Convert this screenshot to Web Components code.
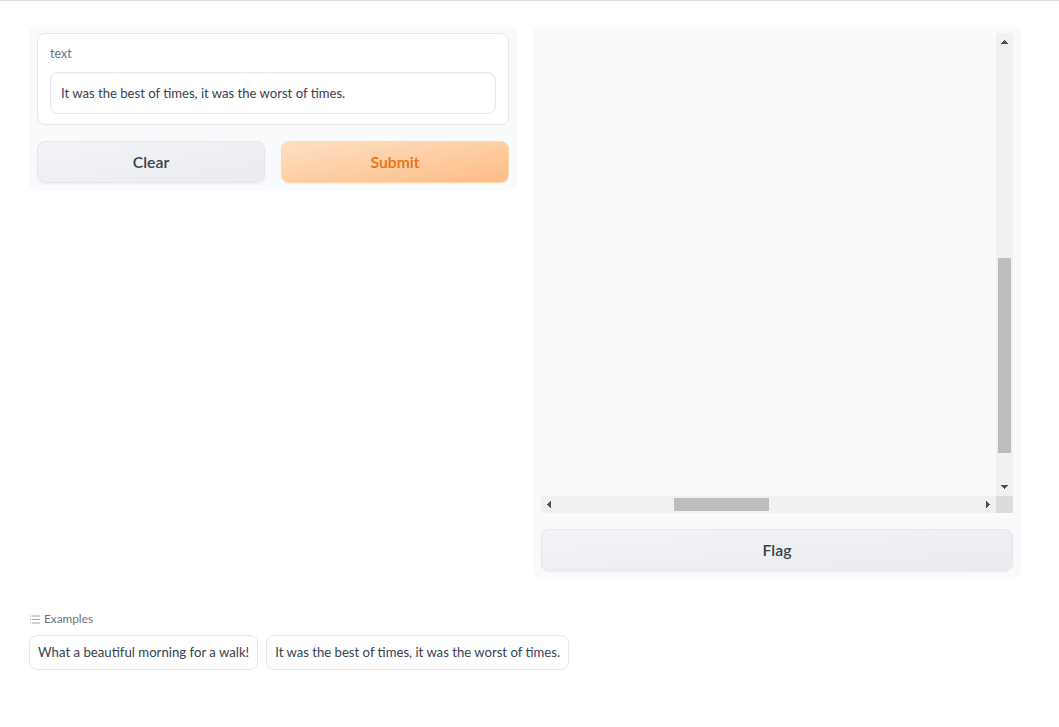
<!DOCTYPE html>
<html>
<head>
<meta charset="utf-8">
<title>Interface</title>
<style>
  html, body { margin: 0; padding: 0; background: #fff; }
  body { font-family: "Lato", "Noto Sans", sans-serif; color: #374151; border-top: 1px solid #dfdfdf; }
</style>
</head>
<body>
<app-shell>
  <app-panel slot="left">
    <text-box label="text" value="It was the best of times, it was the worst of times."></text-box>
    <div style="display:flex;gap:16px;margin-top:16px">
      <app-button>Clear</app-button>
      <app-button variant="primary">Submit</app-button>
    </div>
  </app-panel>
  <app-panel slot="right">
    <scroll-view></scroll-view>
    <div style="display:flex;margin-top:16px">
      <app-button>Flag</app-button>
    </div>
  </app-panel>
  <example-list slot="examples">
    <example-item style="font-size:13.2px">What a beautiful morning for a walk!</example-item>
    <example-item style="font-size:13.14px">It was the best of times, it was the worst of times.</example-item>
  </example-list>
</app-shell>

<script>
  class AppShell extends HTMLElement {
    constructor(){
      super();
      this.attachShadow({mode: "open"});
      this.shadowRoot.innerHTML = `
        <style>
          :host { display: block; padding: 24px 38px 0 29px; }
          .cols { display: grid; grid-template-columns: 488px 488px; gap: 16px; align-items: start; }
          .examples { margin-top: 32px; }
        </style>
        <div class="cols">
          <slot name="left"></slot>
          <slot name="right"></slot>
        </div>
        <div class="examples"><slot name="examples"></slot></div>`;
    }
  }

  class AppPanel extends HTMLElement {
    constructor(){
      super();
      this.attachShadow({mode: "open"});
      this.shadowRoot.innerHTML = `
        <style>
          :host { display: block; padding: 8px; background: #f9fafb; border-radius: 8px; }
        </style>
        <slot></slot>`;
    }
  }

  class TextBox extends HTMLElement {
    constructor(){
      super();
      this.attachShadow({mode: "open"});
      this.shadowRoot.innerHTML = `
        <style>
          :host { display: block; box-sizing: border-box; height: 92px; padding: 12px; background: #fff; border: 1px solid #e5e7eb; border-radius: 8px; }
          .label { font-size: 12.5px; line-height: 16px; color: #6b7280; margin-bottom: 10px; }
          .field { box-sizing: border-box; height: 42px; padding: 0 10px; display: flex; align-items: center; font-size: 13.1px; color: #374151; background: #fff; border: 1px solid #e5e7eb; border-radius: 8px; box-shadow: inset 0 1px 2px rgba(0,0,0,.05); }
        </style>
        <div class="label"></div>
        <div class="field"></div>`;
    }
    connectedCallback(){
      this.shadowRoot.querySelector(".label").textContent = this.getAttribute("label");
      this.shadowRoot.querySelector(".field").textContent = this.getAttribute("value");
    }
  }

  class AppButton extends HTMLElement {
    constructor(){
      super();
      this.attachShadow({mode: "open"});
      this.shadowRoot.innerHTML = `
        <style>
          :host { flex: 1; display: flex; align-items: center; justify-content: center; box-sizing: border-box; height: 42px; padding-bottom: 2px; font-size: 15.8px; font-weight: 600; color: #374151; border: 1px solid #e5e7eb; border-radius: 8px; background: linear-gradient(to bottom right, #f3f4f6, #e9ebef); box-shadow: 0 1px 2px rgba(0,0,0,.05); }
          :host([variant="primary"]) { color: #ea7010; border-color: #fed7aa; background: linear-gradient(to bottom right, #fee0c4, #fdbc84); }
        </style>
        <slot></slot>`;
    }
  }

  class ScrollView extends HTMLElement {
    constructor(){
      super();
      this.attachShadow({mode: "open"});
      this.shadowRoot.innerHTML = `
        <style>
          :host { display: grid; grid-template-columns: 455px 17px; grid-template-rows: 463px 17px; height: 480px; }
          .bar { background: #f1f1f1; display: flex; align-items: center; }
          .v { flex-direction: column; }
          .corner { background: #dcdcdc; }
          svg { display: block; flex: none; shape-rendering: crispEdges; }
          .thumb { background: #bdbdbd; }
          .v .thumb { width: 13px; height: 195px; margin: 214px 0 32px; }
          .h .thumb { height: 13px; width: 95px; margin: 0 217px 0 123px; }
          .up { margin-top: 7px; }
          .left { margin-left: 6px; }
        </style>
        <div></div>
        <div class="bar v">
          <svg class="up" width="7" height="4" viewBox="0 0 7 4"><path d="M3 0h1v1h1v1h1v1h1v1H0V3h1V2h1V1h1z" fill="#505050"/></svg>
          <div class="thumb"></div>
          <svg width="7" height="4" viewBox="0 0 7 4"><path d="M0 0H7V1H6V2H5V3H4V4H3V3H2V2H1V1H0z" fill="#505050"/></svg>
        </div>
        <div class="bar h">
          <svg class="left" width="4" height="7" viewBox="0 0 4 7"><path d="M4 0V7H3V6H2V5H1V4H0V3H1V2H2V1H3V0z" fill="#505050"/></svg>
          <div class="thumb"></div>
          <svg width="4" height="7" viewBox="0 0 4 7"><path d="M0 0H1V1H2V2H3V3H4V4H3V5H2V6H1V7H0z" fill="#505050"/></svg>
        </div>
        <div class="corner"></div>`;
    }
  }

  class ExampleList extends HTMLElement {
    constructor(){
      super();
      this.attachShadow({mode: "open"});
      this.shadowRoot.innerHTML = `
        <style>
          :host { display: block; }
          .head { display: flex; align-items: center; gap: 4px; font-size: 11.8px; line-height: 16px; color: #6b7280; margin-bottom: 8px; }
          .list { display: flex; gap: 8px; }
        </style>
        <div class="head">
          <svg width="11" height="9" viewBox="0 0 11 9" fill="none" stroke="#9ca3af" stroke-width="1">
            <path d="M3 1H11M3 4.500H11M3 8H11"/>
            <path d="M1 1H2M1 4.500H2M1 8H2"/>
          </svg>
          <span>Examples</span>
        </div>
        <div class="list"><slot></slot></div>`;
    }
  }

  class ExampleItem extends HTMLElement {
    constructor(){
      super();
      this.attachShadow({mode: "open"});
      this.shadowRoot.innerHTML = `
        <style>
          :host { display: block; padding: 8px; line-height: 17px; color: #374151; background: #fff; border: 1px solid #e5e7eb; border-radius: 8px; }
        </style>
        <slot></slot>`;
    }
  }

  customElements.define("app-shell", AppShell);
  customElements.define("app-panel", AppPanel);
  customElements.define("text-box", TextBox);
  customElements.define("app-button", AppButton);
  customElements.define("scroll-view", ScrollView);
  customElements.define("example-list", ExampleList);
  customElements.define("example-item", ExampleItem);
</script>
</body>
</html>
